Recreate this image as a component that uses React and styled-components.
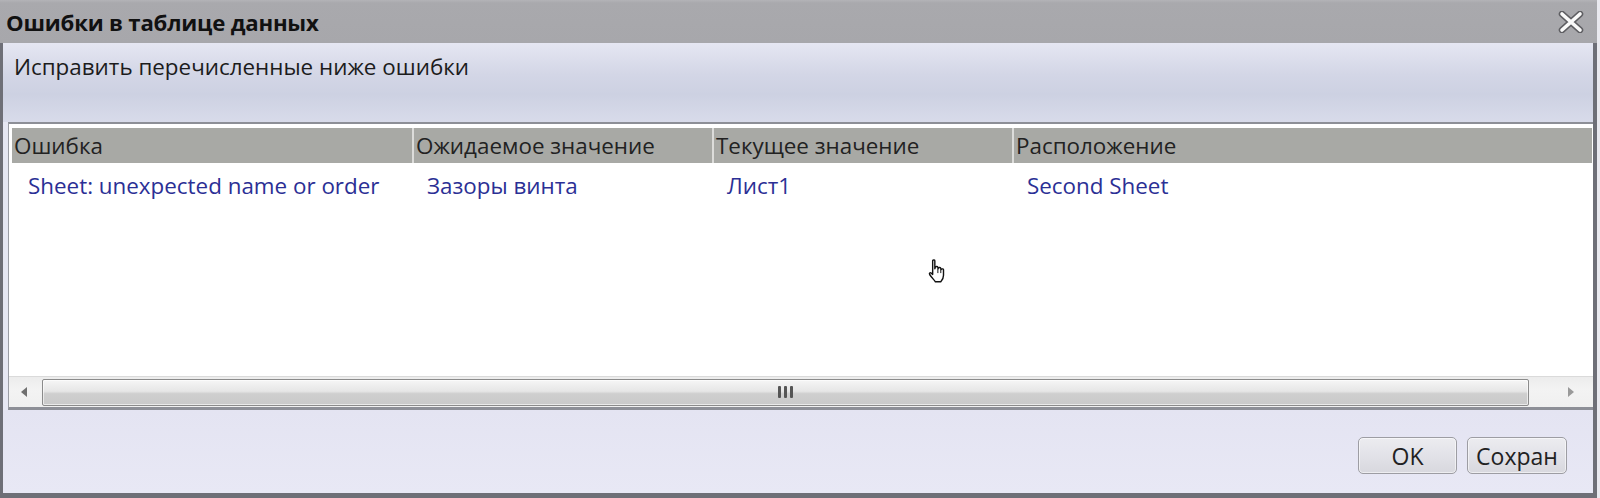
import React from "react";
import styled, { createGlobalStyle } from "styled-components";

const GlobalStyle = createGlobalStyle`
  html, body { margin: 0; padding: 0; background: #e9e9ef; }
  body { font-family: "Open Sans", "Noto Sans", "Liberation Sans", sans-serif; }
  * { box-sizing: border-box; }
`;

const Window = styled.div`
  width: 1597px;
  height: 498px;
  display: flex;
  flex-direction: column;
  position: relative;
`;

const TitleBar = styled.div`
  height: 43px;
  flex: none;
  display: flex;
  align-items: center;
  justify-content: space-between;
  padding: 0 12px 0 6px;
  background: linear-gradient(#b3b3b7 0, #a9a9ad 3px, #a7a7ab 100%);
`;

const Title = styled.div`
  font-size: 22.2px;
  font-weight: 700;
  color: #111;
  letter-spacing: -0.2px;
  padding-top: 2px;
`;

const CloseButton = styled.button`
  border: 0;
  background: transparent;
  padding: 0;
  width: 28px;
  height: 22px;
  display: flex;
  align-items: center;
  justify-content: center;
  cursor: pointer;
`;

const Body = styled.div`
  flex: 1;
  display: flex;
  flex-direction: column;
  border-left: 3px solid #6e6f77;
  border-right: 4px solid #6e6f77;
  border-bottom: 5px solid #6e6f77;
  background: #e6e7f3;
`;

const Instruction = styled.div`
  height: 79px;
  flex: none;
  padding: 8px 0 0 11px;
  font-size: 22.4px;
  color: #1c1c1c;
  background: linear-gradient(#e5e6f2 0%, #d3d6e6 40%, #cdd1e2 65%, #d8dbea 100%);
`;

const Panel = styled.div`
  height: 288px;
  flex: none;
  margin-left: 5px;
  border-top: 2px solid #8d8f97;
  border-left: 1px solid #9b9da5;
  border-bottom: 3px solid #8d8f97;
  background: #fff;
  padding: 4px 0 0 3px;
  display: flex;
  flex-direction: column;
  position: relative;
`;

const columns = "400px 300px 300px 1fr";

const HeaderRow = styled.div`
  display: grid;
  grid-template-columns: ${columns};
  height: 35px;
  background: #a8a9a5;
  margin-right: 1px;
`;

const HeaderCell = styled.div`
  font-size: 22.4px;
  color: #222;
  line-height: 35px;
  padding-left: 2px;
  white-space: nowrap;
  border-left: ${(p) => (p.$first ? "none" : "2px solid #dcdcda")};
`;

const DataRow = styled.div`
  display: grid;
  grid-template-columns: ${columns};
  height: 44px;
  align-items: center;
`;

const DataCell = styled.div`
  font-size: 22.4px;
  color: #2b2f95;
  padding-left: ${(p) => (p.$first ? "16px" : "15px")};
  white-space: nowrap;
`;

const ListArea = styled.div`
  flex: 1;
`;

const ScrollBar = styled.div`
  height: 31px;
  flex: none;
  margin-left: -3px;
  display: flex;
  align-items: center;
  background: linear-gradient(#ececec, #f3f3f3 40%, #f0f0f0);
  border-top: 1px solid #dadada;
`;

const ArrowButton = styled.div`
  width: ${(p) => p.$w}px;
  height: 100%;
  flex: none;
  display: flex;
  align-items: center;
  justify-content: center;
  padding: ${(p) => p.$pad || "0"};
`;

const Thumb = styled.div`
  flex: 1;
  height: 27px;
  border: 1px solid #8b8b8b;
  border-radius: 2px;
  background: linear-gradient(#f6f6f6 0%, #e6e6e6 45%, #cfcfcf 55%, #c9c9c9 100%);
  box-shadow: inset 0 0 0 1px rgba(255, 255, 255, 0.6);
  display: flex;
  align-items: center;
  justify-content: center;
`;

const Grip = styled.div`
  display: flex;
  gap: 3px;
  span {
    display: block;
    width: 3px;
    height: 12px;
    background: #555;
    border-radius: 1px;
  }
`;

const Footer = styled.div`
  flex: 1;
  display: flex;
  justify-content: flex-end;
  align-items: flex-start;
  gap: 10px;
  padding: 27px 26px 0 0;
  background: linear-gradient(#e4e4f2, #e8e8f5);
`;

const Button = styled.button`
  width: ${(p) => p.$w}px;
  height: 37px;
  border: 1px solid #9d9da3;
  border-radius: 5px;
  background: linear-gradient(#ececf0 0%, #e2e2e8 50%, #d8d8de 100%);
  box-shadow: inset 0 0 0 1px rgba(255, 255, 255, 0.55);
  font-family: "Open Sans", "Noto Sans", sans-serif;
  font-size: 23px;
  color: #222;
  padding: 0;
  cursor: pointer;
`;

const Cursor = styled.svg`
  position: absolute;
  left: 918px;
  top: 135px;
`;

const CloseIcon = () => (
  <svg width="28" height="22" viewBox="0 0 28 22">
    <path d="M5 3 L23 19 M23 3 L5 19" stroke="#5e5e62" strokeWidth="6.5" strokeLinecap="round" />
    <path d="M5 3 L23 19 M23 3 L5 19" stroke="#fafafa" strokeWidth="3.6" strokeLinecap="round" />
  </svg>
);

const Triangle = ({ dir }) => (
  <svg width="10" height="12" viewBox="0 0 10 12">
    {dir === "left" ? (
      <path d="M8 1 L2 6 L8 11 Z" fill="#707070" />
    ) : (
      <path d="M2 1 L8 6 L2 11 Z" fill="#9a9a9a" />
    )}
  </svg>
);

const HandCursor = () => (
  <Cursor width="20" height="26" viewBox="0 0 18 24">
    <path
      d="M5 1.5 C5 0.8 7 0.8 7 1.5 L7 9 L7.5 7.5 C8 6.8 9.5 6.8 9.8 7.6 L10 9 L10.4 8.2 C11 7.6 12.3 7.7 12.5 8.6 L12.7 9.8 L13.2 9.3 C13.8 8.9 15 9.1 15 10 L15 15 C15 18 14 19.5 12.5 21 L7.5 21 C6.5 19.5 4 17 2.2 14.3 C1.6 13.3 2.6 12.2 3.6 12.9 L5 14.2 Z"
      fill="#fff"
      stroke="#111"
      strokeWidth="1.3"
      strokeLinejoin="round"
    />
    <path d="M9.8 9 L9.8 13 M12.5 9.8 L12.5 13" stroke="#111" strokeWidth="0.9" />
  </Cursor>
);

const headers = ["Ошибка", "Ожидаемое значение", "Текущее значение", "Расположение"];
const rows = [["Sheet: unexpected name or order", "Зазоры винта", "Лист1", "Second Sheet"]];

export default function App() {
  return (
    <>
      <GlobalStyle />
      <Window>
        <TitleBar>
          <Title>Ошибки в таблице данных</Title>
          <CloseButton aria-label="Закрыть">
            <CloseIcon />
          </CloseButton>
        </TitleBar>
        <Body>
          <Instruction>Исправить перечисленные ниже ошибки</Instruction>
          <Panel>
            <HeaderRow>
              {headers.map((h, i) => (
                <HeaderCell key={h} $first={i === 0}>
                  {h}
                </HeaderCell>
              ))}
            </HeaderRow>
            <ListArea>
              {rows.map((r, ri) => (
                <DataRow key={ri}>
                  {r.map((c, i) => (
                    <DataCell key={i} $first={i === 0}>
                      {c}
                    </DataCell>
                  ))}
                </DataRow>
              ))}
            </ListArea>
            <ScrollBar>
              <ArrowButton $w={33} $pad="0 4px 0 0">
                <Triangle dir="left" />
              </ArrowButton>
              <Thumb>
                <Grip>
                  <span />
                  <span />
                  <span />
                </Grip>
              </Thumb>
              <ArrowButton $w={64} $pad="0 0 0 20px">
                <Triangle dir="right" />
              </ArrowButton>
            </ScrollBar>
            <HandCursor />
          </Panel>
          <Footer>
            <Button $w={99}>OK</Button>
            <Button $w={100}>Сохран</Button>
          </Footer>
        </Body>
      </Window>
    </>
  );
}
